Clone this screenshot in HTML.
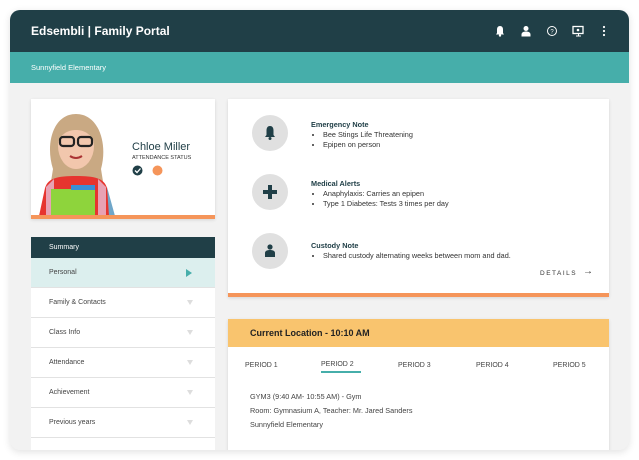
<!DOCTYPE html>
<html><head><meta charset="utf-8"><style>
*{margin:0;padding:0;box-sizing:border-box}
body{width:639px;height:460px;background:#fff;font-family:"Liberation Sans",sans-serif;position:relative;overflow:hidden;color:#2b3a40}
.frame{position:absolute;left:10px;top:10px;width:619px;height:440px;border-radius:10px;background:#f2f2f2;overflow:hidden;box-shadow:0 2px 8px rgba(0,0,0,.12)}
.hdr{position:absolute;left:0;top:0;width:619px;height:42px;background:#203f47}
.hdr .t{position:absolute;left:21px;top:14px;color:#fff;font-size:12px;font-weight:bold}
.sub{position:absolute;left:0;top:42px;width:619px;height:31px;background:#46aeaa}
.sub span{position:absolute;left:21px;top:11px;color:#fff;font-size:7.5px}
.abs{position:absolute}
.card{position:absolute;background:#fff;box-shadow:0 1px 3px rgba(0,0,0,.12)}
.nav div{height:30px;border-bottom:1px solid #e2e2e2;font-size:7px;padding-left:18px;line-height:30px;color:#444;position:relative;background:#fff}
.nav div.tri:after{content:"";position:absolute;right:22px;top:12px;border-left:3px solid transparent;border-right:3px solid transparent;border-top:5px solid #ddd}
.circ{position:absolute;width:36px;height:36px;border-radius:50%;background:#e0e0e0;left:24px}
.nt{position:absolute;left:83px;font-size:7.3px;color:#333;line-height:10px}
.nt b{color:#203f47}
.nt ul{margin-left:12px}
.per{position:absolute;top:352px;font-size:7px;color:#444}
</style></head><body>
<div class="frame">
<div class="hdr"><div class="t">Edsembli | Family Portal</div>
<svg class="abs" style="left:484px;top:15px" width="12" height="12" viewBox="0 0 12 12"><path d="M6 1c-2 0-3 1.5-3 3.5V8L2 9.5h8L9 8V4.5C9 2.5 8 1 6 1z" fill="#fff"/><circle cx="6" cy="10.5" r="1.2" fill="#fff"/></svg>
<svg class="abs" style="left:510px;top:15px" width="12" height="12" viewBox="0 0 12 12"><circle cx="6" cy="3.5" r="2.5" fill="#fff"/><path d="M1.5 11.5v-2c0-2 2-3 4.5-3s4.5 1 4.5 3v2z" fill="#fff"/></svg>
<svg class="abs" style="left:536px;top:15px" width="12" height="12" viewBox="0 0 12 12"><circle cx="6" cy="6" r="4.5" fill="none" stroke="#fff" stroke-width="1"/><text x="6" y="8.3" font-size="6" fill="#fff" text-anchor="middle" font-family="Liberation Sans">?</text></svg>
<svg class="abs" style="left:562px;top:15px" width="13" height="12" viewBox="0 0 13 12"><rect x="1" y="1.5" width="10" height="7" fill="none" stroke="#fff" stroke-width="1.3"/><path d="M4 11h5M6.5 8.5V11" stroke="#fff"/><circle cx="6" cy="5" r="1.3" fill="#fff"/></svg>
<svg class="abs" style="left:591px;top:15px" width="6" height="12" viewBox="0 0 6 12"><circle cx="3" cy="2" r="1.1" fill="#fff"/><circle cx="3" cy="6" r="1.1" fill="#fff"/><circle cx="3" cy="10" r="1.1" fill="#fff"/></svg>
</div>
<div class="sub"><span>Sunnyfield Elementary</span></div>

<div class="card" style="left:21px;top:89px;width:184px;height:120px">
<svg class="abs" style="left:0;top:0" width="100" height="117" viewBox="0 0 100 117">
<path d="M22 70c-8-25 0-55 23-55s32 30 25 55l4 25H18z" fill="#c9a983"/>
<path d="M8 117l6-28c3-10 13-12 31-12s28 2 31 12l6 28z" fill="#e6352f"/>
<path d="M15 88l8-8v37h-8zM75 88l-8-8v37h8z" fill="#e8a2b4"/>
<path d="M76 88l8 29h-6z" fill="#6fa6c9"/>
<ellipse cx="45" cy="47" rx="18" ry="23" fill="#f2c7ad"/>
<path d="M27 42c0-15 7-24 18-24s18 9 18 24c-5-9-12-11-18-11s-13 2-18 11z" fill="#c9a983"/>
<rect x="29" y="38" width="14" height="9" rx="3" fill="none" stroke="#222" stroke-width="2.2"/>
<rect x="47" y="38" width="14" height="9" rx="3" fill="none" stroke="#222" stroke-width="2.2"/>
<path d="M39 57q6 4 12 0" stroke="#a33" stroke-width="2" fill="none"/>
<rect x="20" y="90" width="44" height="27" fill="#8ed43c"/>
<rect x="40" y="86" width="24" height="5" fill="#3a8fd6"/>
</svg>
<div class="abs" style="left:101px;top:42px;font-size:11px;color:#203f47">Chloe Miller</div>
<div class="abs" style="left:101px;top:56px;font-size:5.5px;color:#333">ATTENDANCE STATUS</div>
<svg class="abs" style="left:101px;top:66px" width="32" height="11"><circle cx="5.5" cy="5.5" r="5" fill="#203f47"/><path d="M3 5.5l2 2 3.5-4" stroke="#fff" stroke-width="1.3" fill="none"/><circle cx="25.5" cy="5.5" r="5" fill="#f5955a"/></svg>
<div class="abs" style="left:0;top:116px;width:184px;height:4px;background:#f5955a"></div>
</div>

<div class="card nav" style="left:21px;top:227px;width:184px;height:220px;box-shadow:none;background:none">
<div style="background:#203f47;color:#fff;height:21px;line-height:21px;border:none">Summary</div>
<div style="background:#dcefee">Personal</div>
<div class="tri">Family &amp; Contacts</div>
<div class="tri">Class Info</div>
<div class="tri">Attendance</div>
<div class="tri">Achievement</div>
<div class="tri">Previous years</div>
<div class="tri"></div>
</div>
<svg class="abs" style="left:176px;top:259px" width="6" height="8"><path d="M0 0l6 4-6 4z" fill="#46aeaa"/></svg>

<div class="card" style="left:218px;top:89px;width:381px;height:198px">
<div class="circ" style="top:16px"></div>
<svg class="abs" style="left:35px;top:26px" width="14" height="16" viewBox="0 0 14 16"><path d="M7 1C4.5 1 3.5 3 3.5 5.5V10L2 12h10l-1.5-2V5.5C10.5 3 9.5 1 7 1z" fill="#203f47"/><circle cx="7" cy="13.5" r="1.5" fill="#203f47"/></svg>
<div class="nt" style="top:21px"><b>Emergency Note</b><ul><li>Bee Stings Life Threatening</li><li>Epipen on person</li></ul></div>
<div class="circ" style="top:75px"></div>
<svg class="abs" style="left:35px;top:86px" width="14" height="14"><path d="M5 0h4v5h5v4H9v5H5V9H0V5h5z" fill="#203f47"/></svg>
<div class="nt" style="top:80px"><b>Medical Alerts</b><ul><li>Anaphylaxis: Carries an epipen</li><li>Type 1 Diabetes: Tests 3 times per day</li></ul></div>
<div class="circ" style="top:134px"></div>
<svg class="abs" style="left:37px;top:145px" width="10" height="13"><circle cx="5" cy="3" r="2.6" fill="#203f47"/><path d="M0 13V9c0-2 2-3 5-3s5 1 5 3v4z" fill="#203f47"/></svg>
<div class="nt" style="top:142px"><b>Custody Note</b><ul><li>Shared custody alternating weeks between mom and dad.</li></ul></div>
<div class="abs" style="left:312px;top:171px;font-size:6.5px;letter-spacing:1.5px;color:#333">DETAILS</div>
<div class="abs" style="left:355px;top:167px;font-size:10px;color:#333">→</div>
<div class="abs" style="left:0;top:194px;width:381px;height:4px;background:#f5955a"></div>
</div>

<div class="card" style="left:218px;top:309px;width:381px;height:140px">
<div class="abs" style="left:0;top:0;width:381px;height:28px;background:#f9c46e"></div>
<div class="abs" style="left:22px;top:9px;font-size:9px;font-weight:bold;color:#222">Current Location - 10:10 AM</div>
<div class="abs" style="left:93px;top:52px;width:40px;height:1.5px;background:#46aeaa"></div>
<div class="abs" style="left:22px;top:71px;font-size:7.3px;color:#444;line-height:14px">GYM3 (9:40 AM- 10:55 AM) - Gym<br>Room: Gymnasium A, Teacher: Mr. Jared Sanders<br>Sunnyfield Elementary</div>
</div>
<div class="per" style="left:235px">PERIOD 1</div>
<div class="per" style="left:311px;top:351px">PERIOD 2</div>
<div class="per" style="left:388px">PERIOD 3</div>
<div class="per" style="left:466px">PERIOD 4</div>
<div class="per" style="left:543px">PERIOD 5</div>
</div>
</body></html>
